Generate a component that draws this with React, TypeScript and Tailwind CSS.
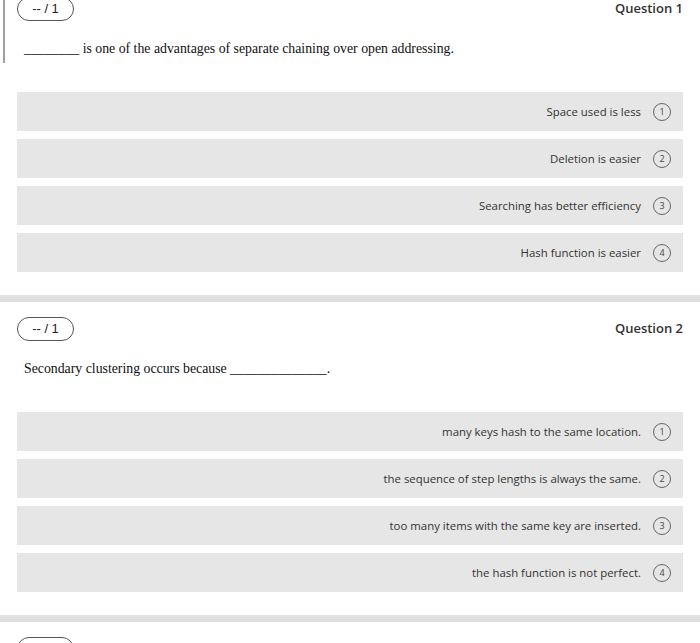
import React from 'react';

interface Question {
  id: number;
  flagged: boolean;
  text: React.ReactNode;
  options: string[];
}

const serif = { fontFamily: '"Liberation Serif", "Times New Roman", serif' };

const questions: Question[] = [
  {
    id: 1,
    flagged: true,
    text: (
      <>
        <span>________</span> is one of the advantages of separate chaining over open addressing.
      </>
    ),
    options: [
      'Space used is less',
      'Deletion is easier',
      'Searching has better efficiency',
      'Hash function is easier',
    ],
  },
  {
    id: 2,
    flagged: false,
    text: (
      <>
        Secondary clustering occurs because <span>______________</span>.
      </>
    ),
    options: [
      'many keys hash to the same location.',
      'the sequence of step lengths is always the same.',
      'too many items with the same key are inserted.',
      'the hash function is not perfect.',
    ],
  },
];

const QuestionBlock: React.FC<{ q: Question }> = ({ q }) => (
  <div className="pt-[15px] pb-[23px] pr-[17px]">
    <div
      className={
        q.flagged
          ? 'ml-[3px] border-l-2 border-[#a0a0a0] pl-[12px] pb-[4px]'
          : 'ml-[3px] border-l-2 border-transparent pl-[12px] pb-[4px]'
      }
    >
      <div className="flex items-center justify-between">
        <div
          className="flex h-[24px] w-[57px] items-center justify-center rounded-full border border-[#555] text-[13px] text-[#222]"
          style={{ fontFamily: '"Liberation Sans", Arial, sans-serif' }}
        >
          -- / 1
        </div>
        <div className="text-[13px] font-semibold text-[#333]" style={{ fontFamily: '"Open Sans", sans-serif' }}>
          Question {q.id}
        </div>
      </div>
      <div className="mt-[18px] pl-[7px] text-[13.8px] leading-[20px] text-[#111]" style={serif}>
        {q.text}
      </div>
    </div>
    <div className="mt-[29px] ml-[17px] flex flex-col gap-[8px]">
      {q.options.map((opt, i) => (
        <div
          key={i}
          className="flex h-[39px] items-center justify-end gap-[12px] bg-[#e6e6e6] pr-[12px]"
          style={{ fontFamily: '"Open Sans", sans-serif' }}
        >
          <span className="text-[11.4px] text-[#333]">{opt}</span>
          <span className="flex h-[18px] w-[18px] items-center justify-center rounded-full border border-[#666] text-[9px] text-[#444]">
            {i + 1}
          </span>
        </div>
      ))}
    </div>
  </div>
);

export default function App() {
  return (
    <div className="h-[643px] w-[700px] overflow-hidden bg-white">
      <div className="-mt-[18px]">
        {questions.map((q) => (
          <div key={q.id}>
            <QuestionBlock q={q} />
            <div className="h-[7px] bg-gradient-to-b from-[#e4e4e4] to-[#dcdcdc]" />
          </div>
        ))}
        <div className="pt-[15px] pl-[17px]">
          <div className="h-[24px] w-[57px] rounded-full border border-[#555]" />
        </div>
      </div>
    </div>
  );
}
